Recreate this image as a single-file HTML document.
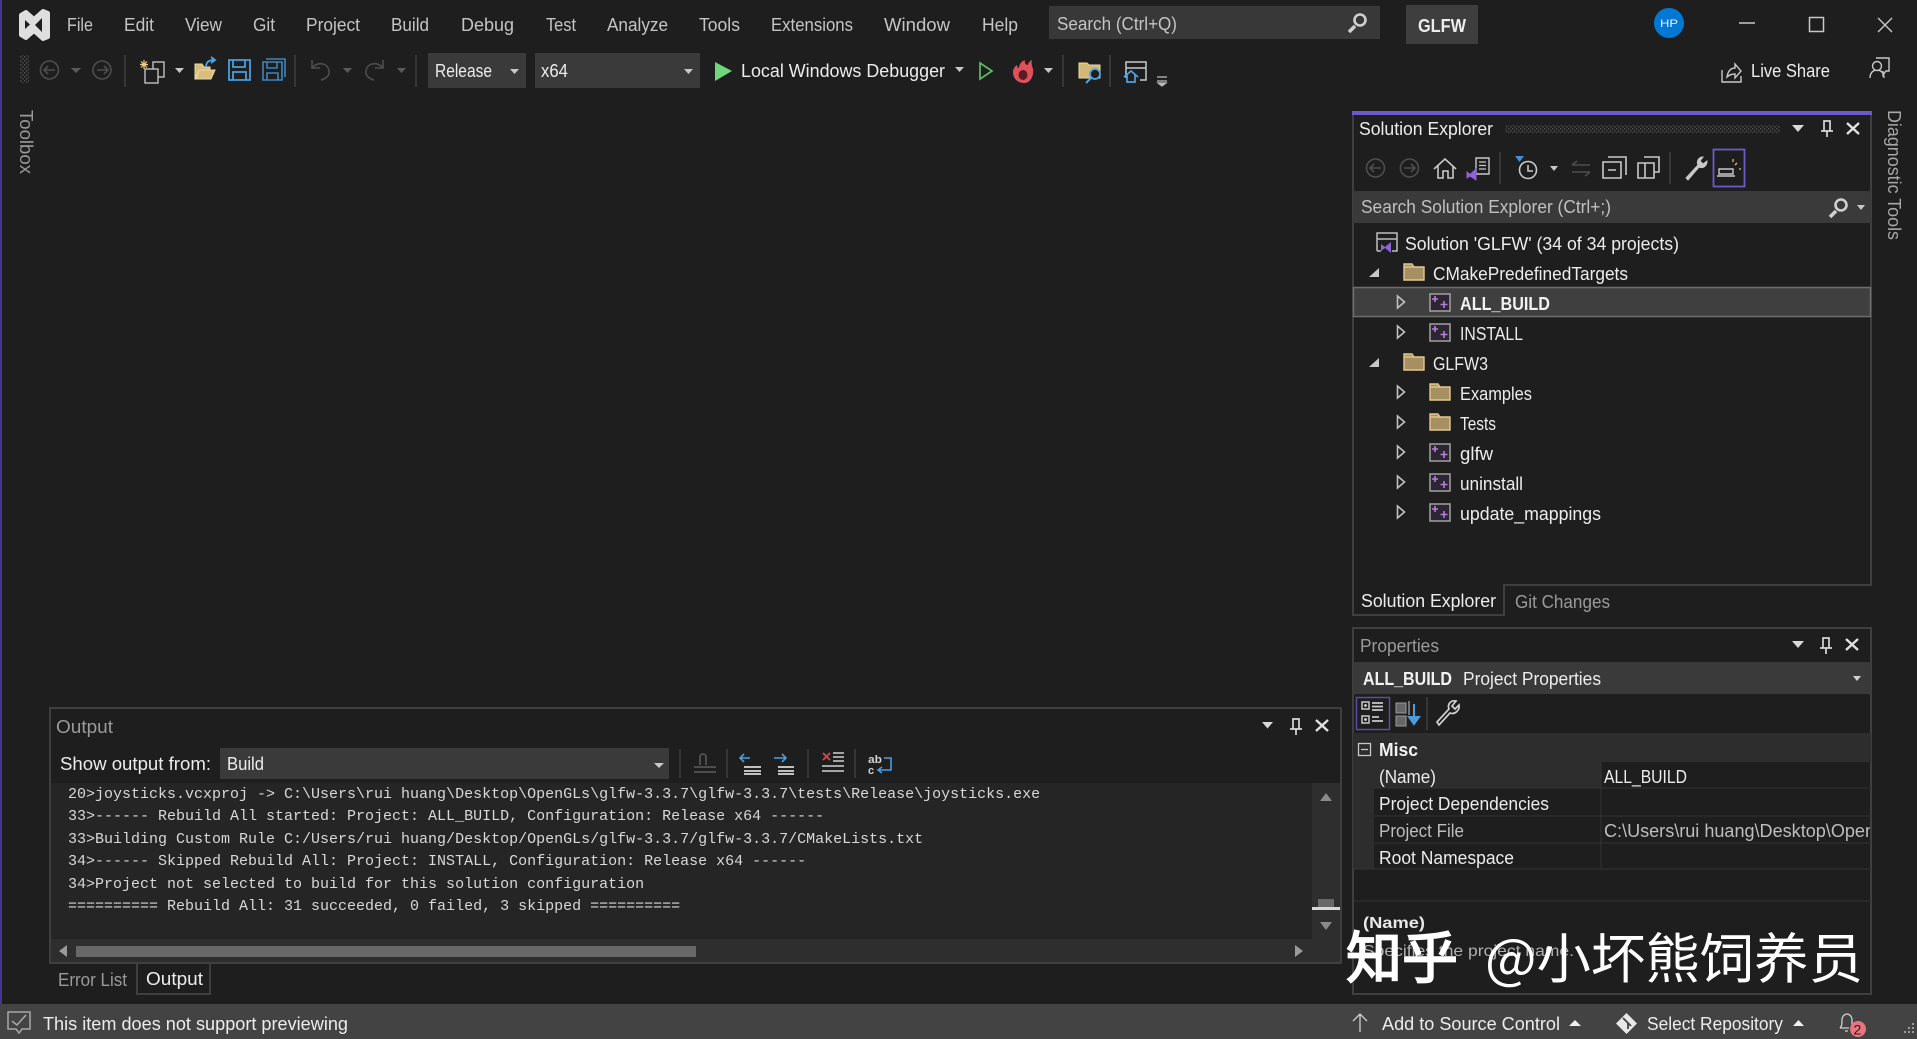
<!DOCTYPE html>
<html><head><meta charset="utf-8"><title>GLFW - Visual Studio</title>
<style>
html,body{margin:0;padding:0;background:#1e1e1e;width:1917px;height:1039px;overflow:hidden}
svg{display:block}
text{font-family:"Liberation Sans","Noto Sans CJK SC",sans-serif;font-size:18px;fill:#d0d0d0}
.m{fill:#c4c4c4}
.d{fill:#9a9a9a}
.w{fill:#ececec}
.b{font-weight:bold;fill:#f2f2f2}
.o{font-family:"Liberation Mono",monospace;font-size:15px;fill:#d8d8d8}
.c{font-family:"Noto Sans CJK SC","Liberation Sans",sans-serif;fill:#fff}
.ln{fill:none;stroke:#c8c8c8;stroke-width:1.6}
.dim{fill:none;stroke:#4d4d4d;stroke-width:1.6}
.sep{stroke:#3f3f3f;stroke-width:1.5}
.bd{fill:none;stroke:#3f3f3f;stroke-width:2}
</style></head><body>
<svg width="1917" height="1039" viewBox="0 0 1917 1039" xmlns="http://www.w3.org/2000/svg">
<defs>
<pattern id="dots" width="4" height="4" patternUnits="userSpaceOnUse"><rect width="1.6" height="1.6" fill="#4a4a4a"/><rect x="2" y="2" width="1.6" height="1.6" fill="#4a4a4a"/></pattern>
<symbol id="proj" width="22" height="19" viewBox="0 0 22 19" overflow="visible"><rect x="1" y="1" width="20" height="17" fill="#2c2533" stroke="#9a9a9a" stroke-width="1.6"/><path d="M6 3v6M3 6h6M15 8v7M11.500 11.500h7" stroke="#b67fd6" stroke-width="1.6" fill="none"/></symbol>
<symbol id="fold" width="22" height="18" viewBox="0 0 22 18" overflow="visible"><path d="M1 1h8l2 3h10v13H1z" fill="#a88f62" stroke="#e0c890" stroke-width="1.400"/><path d="M1 4h10" stroke="#e0c890" stroke-width="1.400"/></symbol>
<symbol id="tri" width="10" height="14" viewBox="0 0 10 14" overflow="visible"><path d="M1.500 1l7 6-7 6z" fill="none" stroke="#c0c0c0" stroke-width="1.600"/></symbol>
<symbol id="tdown" width="11" height="11" viewBox="0 0 11 11" overflow="visible"><path d="M10 1v9H0z" fill="#c8c8c8"/></symbol>
</defs>
<rect width="1917" height="1039" fill="#1e1e1e"/>
<rect x="0" y="0" width="2" height="1039" fill="#43358f"/>

<!-- title -->
<path d="M21 15l5-3 8 7 9-8 5 2v24l-5 2-9-8-8 7-5-3z" fill="#dedede" stroke="#dedede" stroke-width="4" stroke-linejoin="round"/>
<path d="M25 20v9l5-4.500zM42 18v14l-7-7z" fill="#1e1e1e"/>
<text class="m" x="67" y="31" textLength="26" lengthAdjust="spacingAndGlyphs">File</text>
<text class="m" x="124" y="31" textLength="30" lengthAdjust="spacingAndGlyphs">Edit</text>
<text class="m" x="185" y="31" textLength="37" lengthAdjust="spacingAndGlyphs">View</text>
<text class="m" x="253" y="31" textLength="22" lengthAdjust="spacingAndGlyphs">Git</text>
<text class="m" x="306" y="31" textLength="54" lengthAdjust="spacingAndGlyphs">Project</text>
<text class="m" x="391" y="31" textLength="38" lengthAdjust="spacingAndGlyphs">Build</text>
<text class="m" x="461" y="31" textLength="53" lengthAdjust="spacingAndGlyphs">Debug</text>
<text class="m" x="546" y="31" textLength="30" lengthAdjust="spacingAndGlyphs">Test</text>
<text class="m" x="607" y="31" textLength="61" lengthAdjust="spacingAndGlyphs">Analyze</text>
<text class="m" x="699" y="31" textLength="41" lengthAdjust="spacingAndGlyphs">Tools</text>
<text class="m" x="771" y="31" textLength="82" lengthAdjust="spacingAndGlyphs">Extensions</text>
<text class="m" x="884" y="31" textLength="66" lengthAdjust="spacingAndGlyphs">Window</text>
<text class="m" x="982" y="31" textLength="36" lengthAdjust="spacingAndGlyphs">Help</text>
<rect x="1049" y="6" width="331" height="33" fill="#383838"/>
<text class="m" x="1057" y="30" textLength="120" lengthAdjust="spacingAndGlyphs">Search (Ctrl+Q)</text>
<g fill="none" stroke="#d0d0d0"><circle cx="1360" cy="20" r="5.500" stroke-width="2.600"/><path d="M1355 26l-6 6" stroke-width="3.500"/></g>
<rect x="1406" y="5" width="72" height="39" fill="#3e3e3e"/>
<text class="w" font-weight="bold" x="1418" y="32" textLength="48" lengthAdjust="spacingAndGlyphs">GLFW</text>
<circle cx="1669" cy="23" r="15" fill="#0078d4"/>
<text x="1660" y="27" style="font-size:11px;fill:#e8f2fb" textLength="18" lengthAdjust="spacingAndGlyphs">HP</text>
<path d="M1739 23h16" stroke="#c8c8c8" stroke-width="1.500"/>
<rect x="1809.500" y="17.500" width="14" height="14" fill="none" stroke="#c8c8c8" stroke-width="1.500"/>
<path d="M1878 18l14 14M1892 18l-14 14" stroke="#c8c8c8" stroke-width="1.400"/>

<!-- toolbar -->
<rect x="20" y="55" width="9" height="28" fill="url(#dots)"/>
<g class="dim"><circle class="dim" cx="49.500" cy="70" r="9"/><path class="dim" d="M55 70H44M48 66l-4 4 4 4"/><circle class="dim" cx="102" cy="70" r="9"/><path class="dim" d="M97 70h11M104 66l4 4-4 4"/></g>
<path d="M71 68h10l-5 5z" fill="#5a5a5a"/>
<line class="sep" x1="125" y1="55" x2="125" y2="87"/>
<rect x="153" y="62" width="11" height="15" fill="#1e1e1e" stroke="#c0c0c0" stroke-width="1.400"/>
<rect x="145" y="69" width="13" height="14" fill="#1e1e1e" stroke="#c0c0c0" stroke-width="1.400"/>
<path d="M144 60v9M140 64.500h8M141 61.500l6 6M147 61.500l-6 6" stroke="#e8d48a" stroke-width="1.200" fill="none"/>
<path d="M175 68h9l-4.500 5z" fill="#c8c8c8"/>
<path d="M195 79V64h7l2 3h6v3h-11l-3 9zM195 79h16l4-9h-16z" fill="#d8bd7e" stroke="#eed9a0" stroke-width="1"/>
<path d="M206 67c0-5 3-7 8-7M211 57l4 3-4 3" fill="none" stroke="#4ea3e4" stroke-width="1.800"/>
<g fill="none" stroke="#4a9ee0" stroke-width="1.800"><path d="M229 60h21v20h-21z"/><path d="M233 60v7h12v-7M233 80v-8h13v8"/></g>
<g fill="none" stroke="#3f84bd" stroke-width="1.600"><path d="M266 59h19v18"/><path d="M263 62h19v18h-19z"/><path d="M267 62v6h10v-6M267 80v-7h11v7"/></g>
<line class="sep" x1="295" y1="55" x2="295" y2="87"/>
<path class="dim" d="M312 60v8h8M312 68c6-7 16-5 17 3 1 5-4 8-8 9"/>
<path d="M343 68h9l-4.500 5z" fill="#5a5a5a"/>
<path class="dim" d="M383 60v8h-8M383 68c-6-7-16-5-17 3-1 5 4 8 8 9"/>
<path d="M397 68h9l-4.500 5z" fill="#5a5a5a"/>
<line class="sep" x1="416" y1="55" x2="416" y2="87"/>
<rect x="428" y="53" width="98" height="35" fill="#3a3a3a"/>
<text class="w" x="435" y="77" textLength="57" lengthAdjust="spacingAndGlyphs">Release</text>
<path d="M510 69h9l-4.500 5z" fill="#c8c8c8"/>
<rect x="535" y="53" width="165" height="35" fill="#3a3a3a"/>
<text class="w" x="541" y="77" textLength="27" lengthAdjust="spacingAndGlyphs">x64</text>
<path d="M684 69h9l-4.500 5z" fill="#c8c8c8"/>
<path d="M715 62l17 9-17 10z" fill="#6fd67c"/>
<text class="w" x="741" y="77" textLength="204" lengthAdjust="spacingAndGlyphs">Local Windows Debugger</text>
<path d="M955 67h9l-4.500 5z" fill="#c8c8c8"/>
<path d="M980 63l12 8-12 8z" fill="none" stroke="#5dbb68" stroke-width="1.700"/>
<path d="M1024 83c-7 0-11-5-11-11 0-3 2-6 4-7 0 2 1 3 2 3 0-4 3-7 6-8-1 3 1 5 3 5 0-2 2-4 4-5-1 3 0 6 1 9 1 6-2 14-9 14z" fill="#e0505a"/>
<ellipse cx="1023" cy="75" rx="4.500" ry="5" fill="#5a1c22"/>
<path d="M1044 68h9l-4.500 5z" fill="#c8c8c8"/>
<line class="sep" x1="1063" y1="55" x2="1063" y2="87"/>
<path d="M1079 63h8l2 2h11v13h-21z" fill="#d4b878" stroke="#eed9a0"/>
<circle cx="1095" cy="74" r="5" fill="#1e1e1e" stroke="#4ea3e4" stroke-width="1.800"/><path d="M1091 78l-5 5" stroke="#4ea3e4" stroke-width="2"/>
<line class="sep" x1="1110" y1="55" x2="1110" y2="87"/>
<path d="M1126 78v-16h20v18h-6M1126 68h20" fill="none" stroke="#c8c8c8" stroke-width="1.500"/>
<path d="M1124 77l7-6 7 6M1127 75v7h8v-7" fill="none" stroke="#4ea3e4" stroke-width="1.700"/>
<path d="M1157 77h10M1157 81h10M1158 83h8l-4 3z" stroke="#bbb" stroke-width="1.200" fill="#bbb"/>
<path d="M1722 70v12h19v-6M1727 77c1-6 4-9 8-9v-4l6 7-6 7v-4c-3 0-6 1-8 3z" fill="none" stroke="#c8c8c8" stroke-width="1.400"/>
<text class="w" x="1751" y="77" textLength="79" lengthAdjust="spacingAndGlyphs">Live Share</text>
<path d="M1876 58h13v13h-3l-3 4v-4M1870 78c0-5 3-8 7-8s7 3 7 8" fill="none" stroke="#c8c8c8" stroke-width="1.400"/><circle cx="1877" cy="66" r="4.500" fill="#1e1e1e" stroke="#c8c8c8" stroke-width="1.400"/>

<!-- vertical tabs -->
<text class="d" transform="translate(20,110) rotate(90)" textLength="64" lengthAdjust="spacingAndGlyphs">Toolbox</text>
<text transform="translate(1888,110) rotate(90)" style="fill:#a8a8a8" textLength="130" lengthAdjust="spacingAndGlyphs">Diagnostic Tools</text>

<!-- solution explorer -->
<rect x="1353" y="115" width="518" height="470" fill="#1e1e1e"/>
<rect x="1352" y="111" width="520" height="4" fill="#6a5bc8"/>
<path d="M1353 115v470h518V115" class="bd"/>
<text class="w" x="1359" y="135" textLength="134" lengthAdjust="spacingAndGlyphs">Solution Explorer</text>
<rect x="1505" y="125" width="275" height="8" fill="url(#dots)"/>
<path d="M1792 125h12l-6 7z" fill="#d8d8d8"/>
<path d="M1824 121h6v10h-6zM1821 131h12M1827 131v6" fill="none" stroke="#d8d8d8" stroke-width="1.700"/>
<path d="M1847 123l12 11M1859 123l-12 11" stroke="#e0e0e0" stroke-width="2.400"/>
<g><circle class="dim" cx="1375.500" cy="168" r="9"/><path class="dim" d="M1381 168h-11M1374 164l-4 4 4 4"/><circle class="dim" cx="1409.500" cy="168" r="9"/><path class="dim" d="M1404 168h11M1411 164l4 4-4 4"/></g>
<path class="ln" d="M1434 169l11-10 11 10M1438 166v12h5v-7h5v7h5v-12"/>
<path d="M1476 158h13v16h-13z" fill="#1e1e1e" stroke="#c8c8c8" stroke-width="1.400"/><path d="M1479 162h7M1479 165.500h7M1479 169h7" stroke="#c8c8c8" stroke-width="1.200"/>
<path d="M1467 172l3 2.500 6-5.500v11l-6-4-3 2z" fill="#8f62d6" stroke="#8f62d6"/>
<line class="sep" x1="1500" y1="152" x2="1500" y2="184"/>
<path d="M1515 156h9l-4.500 6z" fill="#3f8fdc"/>
<circle class="ln" cx="1528" cy="170" r="8.500"/><path class="ln" d="M1528 165v6h5"/>
<path d="M1550 166h8l-4 5z" fill="#c8c8c8"/>
<path class="dim" d="M1572 165h18M1577 161l-5 4M1590 172h-18M1585 176l5-4"/>
<path class="ln" d="M1608 157h18v18M1603 162h18v16h-18zM1608 170h8"/>
<path class="ln" d="M1644 157h15v15h-5M1638 163h16v15h-16zM1645 163v15"/>
<line class="sep" x1="1670" y1="152" x2="1670" y2="184"/>
<path d="M1686 178l12-13c-2-4 1-8 5-8l-3 4 3 3 4-3c0 5-4 8-8 6l-11 13z" fill="#c8c8c8" stroke="#c8c8c8"/>
<rect x="1713.500" y="149.500" width="31" height="37" fill="none" stroke="#6a5bc8" stroke-width="1.800"/>
<path d="M1719 169h14v5h-14zM1717 176h18" fill="none" stroke="#c8c8c8" stroke-width="1.400"/>
<path d="M1735 165l2-2M1739 169h2M1733 162v-3" stroke="#e6c060" stroke-width="1.300"/>
<rect x="1353" y="191" width="518" height="32" fill="#3a3a3a"/>
<text x="1361" y="213" style="fill:#c0c0c0" textLength="250" lengthAdjust="spacingAndGlyphs">Search Solution Explorer (Ctrl+;)</text>
<g fill="none" stroke="#d0d0d0"><circle cx="1841" cy="205" r="5.500" stroke-width="2.600"/><path d="M1836 211l-6 6" stroke-width="3.500"/></g>
<path d="M1857 205h8l-4 5z" fill="#c8c8c8"/>

<path d="M1377 251v-18h20v18h-5M1377 239h20M1377 251h4" fill="none" stroke="#bdbdbd" stroke-width="1.500"/>
<path d="M1381 244l4 3 6-5v11l-6-5-4 3z" fill="#8f62d6"/>
<text class="w" x="1405" y="250" textLength="274" lengthAdjust="spacingAndGlyphs">Solution 'GLFW' (34 of 34 projects)</text>
<use href="#tdown" x="1369" y="267"/>
<use href="#fold" x="1403" y="263"/>
<text class="w" x="1433" y="280" textLength="195" lengthAdjust="spacingAndGlyphs">CMakePredefinedTargets</text>
<rect x="1353.500" y="287.500" width="517" height="29" fill="#3f3f3f" stroke="#6e6e6e" stroke-width="1.500"/>
<use href="#tri" x="1396" y="295"/><use href="#proj" x="1429" y="293"/>
<text class="b" x="1460" y="310" textLength="90" lengthAdjust="spacingAndGlyphs">ALL_BUILD</text>
<use href="#tri" x="1396" y="325"/><use href="#proj" x="1429" y="323"/>
<text class="w" x="1460" y="340" textLength="63" lengthAdjust="spacingAndGlyphs">INSTALL</text>
<use href="#tdown" x="1369" y="357"/><use href="#fold" x="1403" y="353"/>
<text class="w" x="1433" y="370" textLength="55" lengthAdjust="spacingAndGlyphs">GLFW3</text>
<use href="#tri" x="1396" y="385"/><use href="#fold" x="1429" y="383"/>
<text class="w" x="1460" y="400" textLength="72" lengthAdjust="spacingAndGlyphs">Examples</text>
<use href="#tri" x="1396" y="415"/><use href="#fold" x="1429" y="413"/>
<text class="w" x="1460" y="430" textLength="36" lengthAdjust="spacingAndGlyphs">Tests</text>
<use href="#tri" x="1396" y="445"/><use href="#proj" x="1429" y="443"/>
<text class="w" x="1460" y="460" textLength="33" lengthAdjust="spacingAndGlyphs">glfw</text>
<use href="#tri" x="1396" y="475"/><use href="#proj" x="1429" y="473"/>
<text class="w" x="1460" y="490" textLength="63" lengthAdjust="spacingAndGlyphs">uninstall</text>
<use href="#tri" x="1396" y="505"/><use href="#proj" x="1429" y="503"/>
<text class="w" x="1460" y="520" textLength="141" lengthAdjust="spacingAndGlyphs">update_mappings</text>

<!-- tabs -->
<path d="M1353 585v30h151v-30" class="bd"/><path d="M1354 585h149" stroke="#1e1e1e" stroke-width="2"/>
<text class="w" x="1361" y="607" textLength="135" lengthAdjust="spacingAndGlyphs">Solution Explorer</text>
<text class="d" x="1515" y="608" textLength="95" lengthAdjust="spacingAndGlyphs">Git Changes</text>

<!-- properties -->
<rect x="1353" y="628" width="518" height="366" class="bd"/>
<text class="d" x="1360" y="652" textLength="79" lengthAdjust="spacingAndGlyphs">Properties</text>
<path d="M1792 641h12l-6 7z" fill="#d8d8d8"/>
<path d="M1823 638h6v10h-6zM1820 648h12M1826 648v6" fill="none" stroke="#d8d8d8" stroke-width="1.700"/>
<path d="M1846 639l12 11M1858 639l-12 11" stroke="#e0e0e0" stroke-width="2.400"/>
<rect x="1353" y="662" width="518" height="32" fill="#3a3a3a"/>
<text class="b" x="1363" y="685" textLength="89" lengthAdjust="spacingAndGlyphs">ALL_BUILD</text>
<text class="w" x="1463" y="685" textLength="138" lengthAdjust="spacingAndGlyphs">Project Properties</text>
<path d="M1853 676h8l-4 5z" fill="#d0d0d0"/>
<rect x="1356.500" y="697.500" width="33" height="32" fill="none" stroke="#5a4fa8" stroke-width="1.400"/>
<path d="M1362 702h7v7h-7zM1362 716h7v7h-7zM1364 705.500h3M1364 719.500h3M1365.500 704v3M1365.500 718v3" fill="none" stroke="#c8c8c8" stroke-width="1.500"/>
<path d="M1372 703h11M1372 706.500h11M1372 710h11M1372 717h7M1372 721h11" stroke="#c8c8c8" stroke-width="1.800"/>
<rect x="1396" y="703" width="10" height="10" fill="#666" stroke="#999"/><rect x="1396" y="716" width="10" height="10" fill="#666" stroke="#999"/>
<path d="M1409 701v14" stroke="#999" stroke-width="1.400"/>
<path d="M1414 704v12M1409 717h10l-5 7z" fill="#4a9ee0" stroke="#4a9ee0" stroke-width="2"/>
<line class="sep" x1="1427" y1="697" x2="1427" y2="730"/>
<path d="M1437 722l12-13c-2-5 2-9 7-8l-4 5 3 3 4-4c1 5-4 10-9 8l-11 12z" fill="#1e1e1e" stroke="#d0d0d0" stroke-width="1.700"/>
<rect x="1353" y="733" width="518" height="29" fill="#2d2d2d"/>
<rect x="1353" y="762" width="21" height="107" fill="#2d2d2d"/>
<rect x="1374" y="762" width="227" height="26" fill="#2d2d2d"/>
<path d="M1374 788h497M1374 816h497M1374 843h497M1354 869h517M1601 762v107" stroke="#333" stroke-width="1"/>
<rect x="1358.500" y="743.500" width="12" height="12" fill="none" stroke="#c8c8c8" stroke-width="1.300"/><path d="M1361 749.500h7" stroke="#c8c8c8" stroke-width="1.300"/>
<text class="b" x="1379" y="756" textLength="39" lengthAdjust="spacingAndGlyphs">Misc</text>
<text class="w" x="1379" y="783" textLength="57" lengthAdjust="spacingAndGlyphs">(Name)</text>
<text class="w" x="1604" y="783" textLength="83" lengthAdjust="spacingAndGlyphs">ALL_BUILD</text>
<text class="w" x="1379" y="810" textLength="170" lengthAdjust="spacingAndGlyphs">Project Dependencies</text>
<text x="1379" y="837" style="fill:#bdbdbd" textLength="85" lengthAdjust="spacingAndGlyphs">Project File</text>
<svg x="1604" y="820" width="266" height="24"><text x="0" y="17" style="fill:#bdbdbd" textLength="271" lengthAdjust="spacingAndGlyphs">C:\Users\rui huang\Desktop\Open</text></svg>
<text class="w" x="1379" y="864" textLength="135" lengthAdjust="spacingAndGlyphs">Root Namespace</text>
<path d="M1354 901h517" stroke="#333"/>
<text x="1363" y="928" style="font-weight:bold;font-size:16px;fill:#e8e8e8" textLength="62" lengthAdjust="spacingAndGlyphs">(Name)</text>
<text x="1363" y="956" style="font-size:16px;fill:#b0b0b0" textLength="211" lengthAdjust="spacingAndGlyphs">Specifies the project name.</text>

<!-- output -->
<rect x="50" y="708" width="1291" height="255" class="bd"/>
<text class="d" x="56" y="733" textLength="57" lengthAdjust="spacingAndGlyphs">Output</text>
<path d="M1262 722h11l-5.500 6.500z" fill="#d8d8d8"/>
<path d="M1293 719h6v10h-6zM1290 729h12M1296 729v6" fill="none" stroke="#d8d8d8" stroke-width="1.700"/>
<path d="M1316 720l12 11M1328 720l-12 11" stroke="#e0e0e0" stroke-width="2.400"/>
<text class="w" x="60" y="770" textLength="151" lengthAdjust="spacingAndGlyphs">Show output from:</text>
<rect x="220" y="748" width="449" height="31" fill="#3a3a3a"/>
<text class="w" x="227" y="770" textLength="37" lengthAdjust="spacingAndGlyphs">Build</text>
<path d="M654 763h10l-5 5z" fill="#c8c8c8"/>
<line class="sep" x1="680" y1="749" x2="680" y2="778"/>
<path d="M700 765v-8a3 3 0 0 1 6 0v8M694 767h22M694 772h22" fill="none" stroke="#4d4d4d" stroke-width="2"/>
<line class="sep" x1="727" y1="749" x2="727" y2="778"/>
<path d="M740 758h10M744 754l-4 4 4 4M774 758h12M782 754l4 4-4 4" fill="none" stroke="#4a9ee0" stroke-width="1.600"/>
<path d="M744 767h17M744 771h17M744 774h17M778 767h16M778 771h16M778 774h16" stroke="#d8d8d8" stroke-width="1.700"/>
<line class="sep" x1="808" y1="749" x2="808" y2="778"/>
<path d="M823 753l7 7M830 753l-7 7" stroke="#e0404f" stroke-width="1.900"/>
<path d="M833 753h11M833 757h11M833 761h11M822 766h22M822 771h22" stroke="#d0d0d0" stroke-width="1.500"/>
<line class="sep" x1="855" y1="749" x2="855" y2="778"/>
<text x="868" y="763" style="font-size:11px;font-weight:bold;fill:#d0d0d0" textLength="14" lengthAdjust="spacingAndGlyphs">ab</text>
<text x="868" y="774" style="font-size:11px;font-weight:bold;fill:#d0d0d0">c</text>
<path d="M884 758h7v12h-13M882 767l-4 3 4 3" fill="none" stroke="#4a9ee0" stroke-width="1.600"/>

<rect x="51" y="783" width="1261" height="179" fill="#252526"/>
<text class="o" x="68" y="798">20&gt;joysticks.vcxproj -&gt; C:\Users\rui huang\Desktop\OpenGLs\glfw-3.3.7\glfw-3.3.7\tests\Release\joysticks.exe</text>
<text class="o" x="68" y="820">33&gt;------ Rebuild All started: Project: ALL_BUILD, Configuration: Release x64 ------</text>
<text class="o" x="68" y="843">33&gt;Building Custom Rule C:/Users/rui huang/Desktop/OpenGLs/glfw-3.3.7/glfw-3.3.7/CMakeLists.txt</text>
<text class="o" x="68" y="865">34&gt;------ Skipped Rebuild All: Project: INSTALL, Configuration: Release x64 ------</text>
<text class="o" x="68" y="888">34&gt;Project not selected to build for this solution configuration</text>
<text class="o" x="68" y="910">========== Rebuild All: 31 succeeded, 0 failed, 3 skipped ==========</text>
<rect x="1312" y="783" width="28" height="179" fill="#2e2e2e"/>
<path d="M1320 801h12l-6-8z" fill="#8a8a8a"/>
<rect x="1318" y="899" width="16" height="9" fill="#686868"/>
<rect x="1312" y="907" width="28" height="3" fill="#d8d8d8"/>
<path d="M1320 922h12l-6 8z" fill="#8a8a8a"/>
<rect x="51" y="939" width="1261" height="23" fill="#2e2e2e"/>
<rect x="76" y="946" width="620" height="11" fill="#686868"/>
<path d="M67 945v12l-8-6z" fill="#9a9a9a"/>
<path d="M1295 945v12l8-6z" fill="#9a9a9a"/>
<text class="d" x="58" y="986" textLength="69" lengthAdjust="spacingAndGlyphs">Error List</text>
<path d="M137 963v31h73v-31" class="bd"/>
<text class="w" x="146" y="985" textLength="57" lengthAdjust="spacingAndGlyphs">Output</text>

<!-- status bar -->
<rect x="0" y="1004" width="1917" height="35" fill="#434343"/>
<path d="M8 1012h22v17h-8l-3 4-3-4H8z" fill="none" stroke="#a8a8a8" stroke-width="1.500"/>
<path d="M12 1021l5 4 9-10" fill="none" stroke="#a8a8a8" stroke-width="1.500"/>
<text class="w" x="43" y="1030" textLength="305" lengthAdjust="spacingAndGlyphs">This item does not support previewing</text>
<path d="M1360 1032v-18M1353 1021l7-7 7 7" fill="none" stroke="#d0d0d0" stroke-width="1.300"/>
<text class="w" x="1382" y="1030" textLength="178" lengthAdjust="spacingAndGlyphs">Add to Source Control</text>
<path d="M1569 1026h12l-6-6z" fill="#f0f0f0"/>
<path d="M1626.500 1013l10.500 10.500-10.500 10.500-10.500-10.500z" fill="#e8e8e8"/>
<path d="M1623 1018l5 5v6M1628 1023l3 3" stroke="#434343" stroke-width="1.800" fill="none"/>
<text class="w" x="1647" y="1030" textLength="136" lengthAdjust="spacingAndGlyphs">Select Repository</text>
<path d="M1793 1026h11l-5.500-6z" fill="#f0f0f0"/>
<path d="M1840 1028c2-2 2-4 2-8 0-4 3-6 5-6s5 2 5 6v5M1840 1028h9M1845 1031h3" fill="none" stroke="#d0d0d0" stroke-width="1.300"/>
<circle cx="1858" cy="1029" r="8" fill="#e8757f"/>
<text x="1853.500" y="1034.500" style="font-size:14px;fill:#2a1a1c">2</text>
<path d="M1912 1023h2v2h-2zM1908 1027h2v2h-2zM1912 1027h2v2h-2zM1904 1031h2v2h-2zM1908 1031h2v2h-2zM1912 1031h2v2h-2z" fill="#9a9a9a"/>

<!-- watermark -->
<text class="c" x="1346" y="978" style="font-size:56px;font-weight:400;stroke:#fff;stroke-width:1.800px" textLength="112" lengthAdjust="spacingAndGlyphs">知乎</text>
<text class="c" x="1485" y="978" style="font-size:54px;font-weight:400" textLength="378" lengthAdjust="spacingAndGlyphs">@小坏熊饲养员</text>
</svg>
</body></html>
